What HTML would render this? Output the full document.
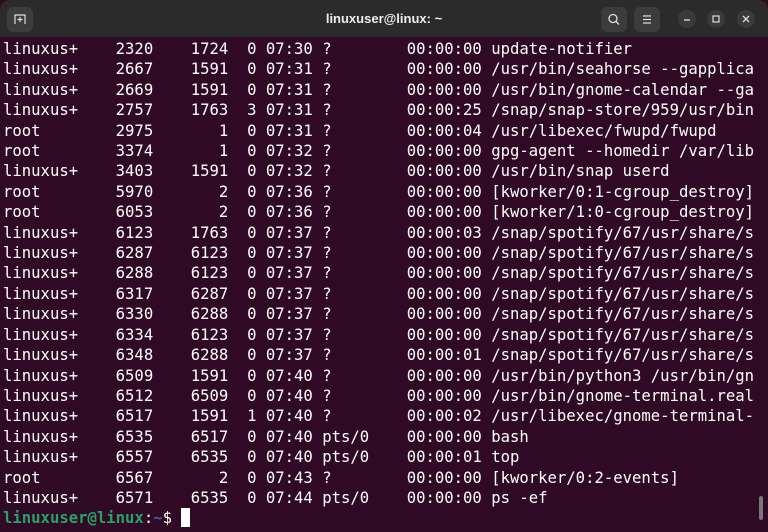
<!DOCTYPE html>
<html><head><meta charset="utf-8"><style>
html,body{margin:0;padding:0;width:768px;height:532px;overflow:hidden;background:#300a24}
.tb{position:absolute;left:0;top:0;width:768px;height:37px;background:#2b2b2b;border-radius:10px 10px 0 0}
.btn{position:absolute;top:7px;width:26px;height:25px;background:#3c3c3c;border-radius:6px}
.c{position:absolute;top:10px;width:18px;height:18px;border-radius:50%;background:#3a3a3a}
.title{position:absolute;left:0;width:768px;top:11px;text-align:center;color:#eee;font:bold 13px "Liberation Sans",sans-serif}
pre{position:absolute;left:3px;top:39px;margin:0;font-family:"DejaVu Sans Mono",monospace;font-size:15.6px;line-height:20.4px;color:#fff;white-space:pre}
.g{color:#26a269;font-weight:bold}.b{color:#3465a4;font-weight:bold}
.cur{display:inline-block;width:9px;height:19px;background:#fff;vertical-align:-4px}
</style></head><body>
<div class="tb">
<div class="btn" style="left:7px"><svg width="26" height="25"><path d="M8 17V8h10v9M13 10v5M10.5 12.5h5" stroke="#ddd" stroke-width="1.2" fill="none"/></svg></div>
<div class="title">linuxuser@linux: ~</div>
<div class="btn" style="left:601px"><svg width="26" height="25"><circle cx="12" cy="11.5" r="4" stroke="#ddd" stroke-width="1.3" fill="none"/><path d="M15 14.5l3 3" stroke="#ddd" stroke-width="1.3"/></svg></div>
<div class="btn" style="left:634px"><svg width="26" height="25"><path d="M9 9h8M9 12.5h8M9 16h8" stroke="#ddd" stroke-width="1.3"/></svg></div>
<div class="c" style="left:678px"><svg width="18" height="18"><path d="M6 10h6" stroke="#ddd" stroke-width="1.3"/></svg></div>
<div class="c" style="left:707px"><svg width="18" height="18"><rect x="6" y="6" width="6" height="6" stroke="#ddd" stroke-width="1.2" fill="none"/></svg></div>
<div class="c" style="left:737px"><svg width="18" height="18"><path d="M6 6l6 6M12 6l-6 6" stroke="#ddd" stroke-width="1.3"/></svg></div>
</div>
<pre>linuxus+    2320    1724  0 07:30 ?        00:00:00 update-notifier
linuxus+    2667    1591  0 07:31 ?        00:00:00 /usr/bin/seahorse --gapplica
linuxus+    2669    1591  0 07:31 ?        00:00:00 /usr/bin/gnome-calendar --ga
linuxus+    2757    1763  3 07:31 ?        00:00:25 /snap/snap-store/959/usr/bin
root        2975       1  0 07:31 ?        00:00:04 /usr/libexec/fwupd/fwupd
root        3374       1  0 07:32 ?        00:00:00 gpg-agent --homedir /var/lib
linuxus+    3403    1591  0 07:32 ?        00:00:00 /usr/bin/snap userd
root        5970       2  0 07:36 ?        00:00:00 [kworker/0:1-cgroup_destroy]
root        6053       2  0 07:36 ?        00:00:00 [kworker/1:0-cgroup_destroy]
linuxus+    6123    1763  0 07:37 ?        00:00:03 /snap/spotify/67/usr/share/s
linuxus+    6287    6123  0 07:37 ?        00:00:00 /snap/spotify/67/usr/share/s
linuxus+    6288    6123  0 07:37 ?        00:00:00 /snap/spotify/67/usr/share/s
linuxus+    6317    6287  0 07:37 ?        00:00:00 /snap/spotify/67/usr/share/s
linuxus+    6330    6288  0 07:37 ?        00:00:00 /snap/spotify/67/usr/share/s
linuxus+    6334    6123  0 07:37 ?        00:00:00 /snap/spotify/67/usr/share/s
linuxus+    6348    6288  0 07:37 ?        00:00:01 /snap/spotify/67/usr/share/s
linuxus+    6509    1591  0 07:40 ?        00:00:00 /usr/bin/python3 /usr/bin/gn
linuxus+    6512    6509  0 07:40 ?        00:00:00 /usr/bin/gnome-terminal.real
linuxus+    6517    1591  1 07:40 ?        00:00:02 /usr/libexec/gnome-terminal-
linuxus+    6535    6517  0 07:40 pts/0    00:00:00 bash
linuxus+    6557    6535  0 07:40 pts/0    00:00:01 top
root        6567       2  0 07:43 ?        00:00:00 [kworker/0:2-events]
linuxus+    6571    6535  0 07:44 pts/0    00:00:00 ps -ef
<span class="g">linuxuser@linux</span>:<span class="b">~</span>$ <span class="cur"></span></pre>
<div style="position:absolute;left:759px;top:496px;width:4px;height:24px;background:#777;border-radius:2px"></div>
</body></html>
